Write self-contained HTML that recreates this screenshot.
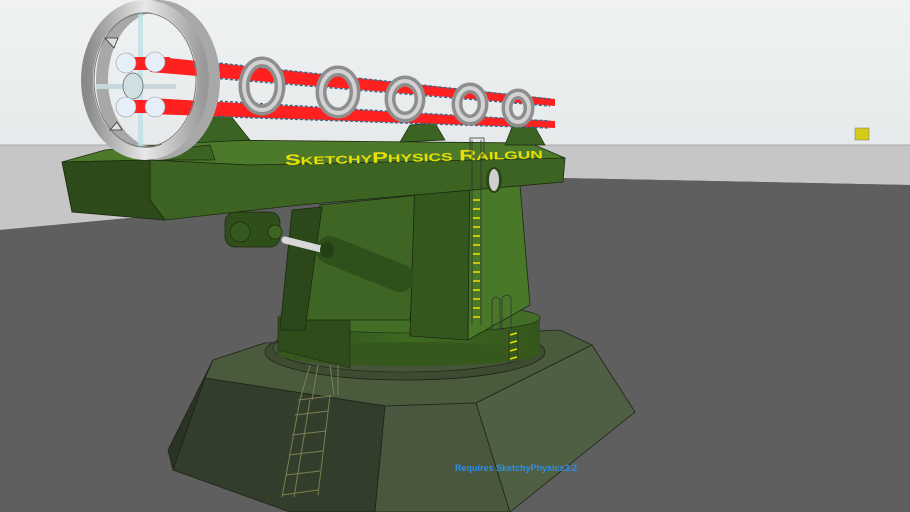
<!DOCTYPE html>
<html><head><meta charset="utf-8"><style>
html,body{margin:0;padding:0;width:910px;height:512px;overflow:hidden;background:#5e5e5e}
svg{display:block}
</style></head><body>
<svg width="910" height="512" viewBox="0 0 910 512" xmlns="http://www.w3.org/2000/svg">
<defs>
<linearGradient id="sky" x1="0" y1="0" x2="0" y2="1"><stop offset="0" stop-color="#f0f2f2"/><stop offset="1" stop-color="#e6eaeb"/></linearGradient>
<linearGradient id="silver" x1="0" y1="0" x2="1" y2="0"><stop offset="0" stop-color="#8a8a8a"/><stop offset="0.5" stop-color="#e8e8e8"/><stop offset="1" stop-color="#9a9a9a"/></linearGradient>
<linearGradient id="drum" x1="0" y1="0" x2="1" y2="0"><stop offset="0" stop-color="#2d4a18"/><stop offset="0.5" stop-color="#3f6a22"/><stop offset="1" stop-color="#34561c"/></linearGradient>
</defs>
<rect x="0" y="0" width="910" height="145" fill="url(#sky)"/>
<polygon points="0,145 910,145 910,185 560,178 0,230" fill="#c6c6c6"/>
<line x1="0" y1="145" x2="910" y2="145" fill="none" stroke="#aaa" stroke-width="1"/>
<polygon points="0,230 560,178 910,185 910,512 0,512" fill="#5f5f5f"/>
<rect x="855" y="128" width="14" height="12" fill="#d4cc18" stroke="#777" stroke-width="0.5"/>

<g stroke="#1e2418" stroke-width="0.8">
<polygon points="213,360 265,343 560,330 592,345 476,403 385,406 205,378" fill="#4a5a3c"/>
<polygon points="213,360 205,378 173,470 168,450" fill="#2a3324"/>
<polygon points="205,378 385,406 375,512 290,512 173,470" fill="#333d2b"/>
<polygon points="385,406 476,403 510,512 375,512" fill="#48573d"/>
<polygon points="476,403 592,345 635,412 510,512" fill="#4f5f43"/>
</g>
<ellipse cx="405" cy="352" rx="140" ry="28" fill="#3e4b32" stroke="#1e2418" stroke-width="0.8"/>
<ellipse cx="405" cy="348" rx="132" ry="24" fill="#46553a" stroke="#1e2418" stroke-width="0.6"/>
<rect x="278" y="318" width="262" height="36" fill="url(#drum)"/>
<ellipse cx="409" cy="354" rx="131" ry="12" fill="#36581d"/>
<ellipse cx="409" cy="318" rx="131" ry="15" fill="#426e25" stroke="#1e2a12" stroke-width="0.6"/>
<polygon points="278,318 350,303 350,368 278,350" fill="#2f4c1a" stroke="#1b2a10" stroke-width="0.6"/>

<g stroke="#1b2a10" stroke-width="0.8">
<polygon points="320,205 420,195 410,320 300,320" fill="#3e6523"/>
<polygon points="292,210 322,207 305,330 280,330" fill="#2c4719"/>
<polygon points="415,178 470,165 468,340 410,336" fill="#34571e"/>
<polygon points="470,165 520,185 530,305 468,340" fill="#4a7829"/>
</g>
<line x1="330" y1="250" x2="400" y2="278" stroke="#2f501a" stroke-width="28" stroke-linecap="round"/>
<line x1="285" y1="240" x2="325" y2="250" stroke="#d8d8d8" stroke-width="7" stroke-linecap="round"/>
<ellipse cx="327" cy="250" rx="7" ry="8" fill="#253f14"/>
<rect x="225" y="212" width="55" height="35" rx="10" fill="#2f4e1a" stroke="#1b2a10" stroke-width="0.7"/>
<circle cx="275" cy="232" r="7" fill="#3d6423" stroke="#1b2a10" stroke-width="0.7"/>
<circle cx="240" cy="232" r="10" fill="#36591f" stroke="#1b2a10" stroke-width="0.7"/>

<g stroke="#1b2a10" stroke-width="0.8">
<polygon points="62,162 105,150 210,140 530,143 565,158 430,165 250,165 150,160" fill="#4d7a2a"/>
<polygon points="150,160 250,165 565,158 563,182 300,205 165,220 150,200" fill="#3c6322"/>
<polygon points="62,162 150,160 150,200 165,220 72,212" fill="#2e4a1a"/>
</g>
<text x="285" y="165" font-family="Liberation Sans, sans-serif" font-size="15" font-weight="bold" fill="#e8e000" transform="rotate(-1.5 285 165)" style="font-variant:small-caps" textLength="258" lengthAdjust="spacingAndGlyphs">SketchyPhysics Railgun</text>
<ellipse cx="494" cy="180" rx="8" ry="13" fill="#2a4517"/>
<ellipse cx="494" cy="180" rx="5" ry="11" fill="#cfcfcf"/>

<g fill="#3b6322" stroke="#1b2a10" stroke-width="0.7">
<polygon points="205,118 230,115 250,140 190,143"/>
<polygon points="410,125 435,123 445,140 400,142"/>
<polygon points="512,127 535,127 545,145 505,145"/>
<polygon points="165,150 210,145 215,160 160,160"/>
</g>

<polygon points="150,56 555,99 555,106 150,72" fill="#ff2020"/>
<polygon points="150,98 555,121 555,128 150,114" fill="#ff2020"/>
<g fill="none" stroke="#3a6a8a" stroke-width="1.5" stroke-dasharray="3 2">
<line x1="200" y1="61" x2="550" y2="99"/>
<line x1="200" y1="77" x2="550" y2="106"/>
<line x1="200" y1="100" x2="550" y2="121"/>
<line x1="200" y1="116" x2="550" y2="128"/>
</g>
<g fill="none" stroke="#8e8e8e" stroke-width="11">
<ellipse cx="262" cy="86" rx="18" ry="24"/>
<ellipse cx="338" cy="92" rx="17" ry="21"/>
<ellipse cx="405" cy="99" rx="15" ry="18"/>
<ellipse cx="470" cy="104" rx="13" ry="16"/>
<ellipse cx="518" cy="108" rx="11" ry="14"/>
</g>
<g fill="none" stroke="#d2d2d2" stroke-width="4">
<ellipse cx="262" cy="86" rx="18" ry="24"/>
<ellipse cx="338" cy="92" rx="17" ry="21"/>
<ellipse cx="405" cy="99" rx="15" ry="18"/>
<ellipse cx="470" cy="104" rx="13" ry="16"/>
<ellipse cx="518" cy="108" rx="11" ry="14"/>
</g>

<ellipse cx="158" cy="80" rx="56" ry="74" fill="none" stroke="#a8a8a8" stroke-width="12"/>
<rect x="138" y="12" width="5" height="145" fill="#bfe0e8" opacity="0.8"/>
<ellipse cx="145" cy="80" rx="58" ry="74" fill="none" stroke="url(#silver)" stroke-width="12"/>
<ellipse cx="145" cy="80" rx="51" ry="67" fill="none" stroke="#777" stroke-width="1"/>
<rect x="96" y="84" width="80" height="5" fill="#c8d8dc"/>
<ellipse cx="133" cy="86" rx="10" ry="13" fill="#d0dfe3" stroke="#666" stroke-width="0.8"/>
<rect x="130" y="57" width="40" height="13" fill="#ff2020"/>
<rect x="130" y="100" width="40" height="13" fill="#ff2020"/>
<g fill="#e6eef8" stroke="#99a" stroke-width="0.6">
<circle cx="126" cy="63" r="10"/><circle cx="155" cy="62" r="10"/>
<circle cx="126" cy="107" r="10"/><circle cx="155" cy="107" r="10"/>
</g>
<g fill="#ddd" stroke="#333" stroke-width="0.8">
<polygon points="105,38 118,38 114,48"/><polygon points="110,130 122,130 117,122"/>
</g>

<g stroke="#e8e000" stroke-width="1.6">
<line x1="473" y1="200" x2="480" y2="200"/><line x1="473" y1="209" x2="480" y2="209"/><line x1="473" y1="218" x2="480" y2="218"/><line x1="473" y1="227" x2="480" y2="227"/><line x1="473" y1="236" x2="480" y2="236"/><line x1="473" y1="245" x2="480" y2="245"/><line x1="473" y1="254" x2="480" y2="254"/><line x1="473" y1="263" x2="480" y2="263"/><line x1="473" y1="272" x2="480" y2="272"/><line x1="473" y1="281" x2="480" y2="281"/><line x1="473" y1="290" x2="480" y2="290"/><line x1="473" y1="299" x2="480" y2="299"/><line x1="473" y1="308" x2="480" y2="308"/><line x1="473" y1="317" x2="480" y2="317"/>
<line x1="510" y1="335" x2="517" y2="333"/><line x1="510" y1="343" x2="517" y2="341"/><line x1="510" y1="351" x2="517" y2="349"/><line x1="510" y1="359" x2="517" y2="357"/>
</g>
<g fill="none" stroke="#333" stroke-width="0.8">
<line x1="472" y1="140" x2="472" y2="325"/><line x1="481" y1="140" x2="481" y2="325"/>
<path d="M470,155 V138 H484 V155"/>
<path d="M492,330 V300 Q496,294 500,300 V330 M502,330 V298 Q507,292 511,298 V330"/>
<line x1="509" y1="330" x2="509" y2="365"/><line x1="518" y1="330" x2="518" y2="365"/>
</g>
<g fill="none" stroke="#7a8050" stroke-width="1">
<line x1="300" y1="400" x2="282" y2="497"/><line x1="310" y1="400" x2="294" y2="497"/>
<line x1="330" y1="395" x2="318" y2="495"/>
<path d="M282,495 L318,490 M286,475 L320,471 M289,455 L323,451 M292,435 L326,431 M295,415 L329,411 M298,400 L332,396"/>
<path d="M310,365 L300,400 M318,365 L312,400 M330,365 L334,395 M338,365 L338,395"/>
</g>
<text x="455" y="471" font-family="Liberation Sans, sans-serif" font-size="9" font-weight="bold" fill="#2f8fe8">Requires SketchyPhysics3.2</text>
</svg>
</body></html>
